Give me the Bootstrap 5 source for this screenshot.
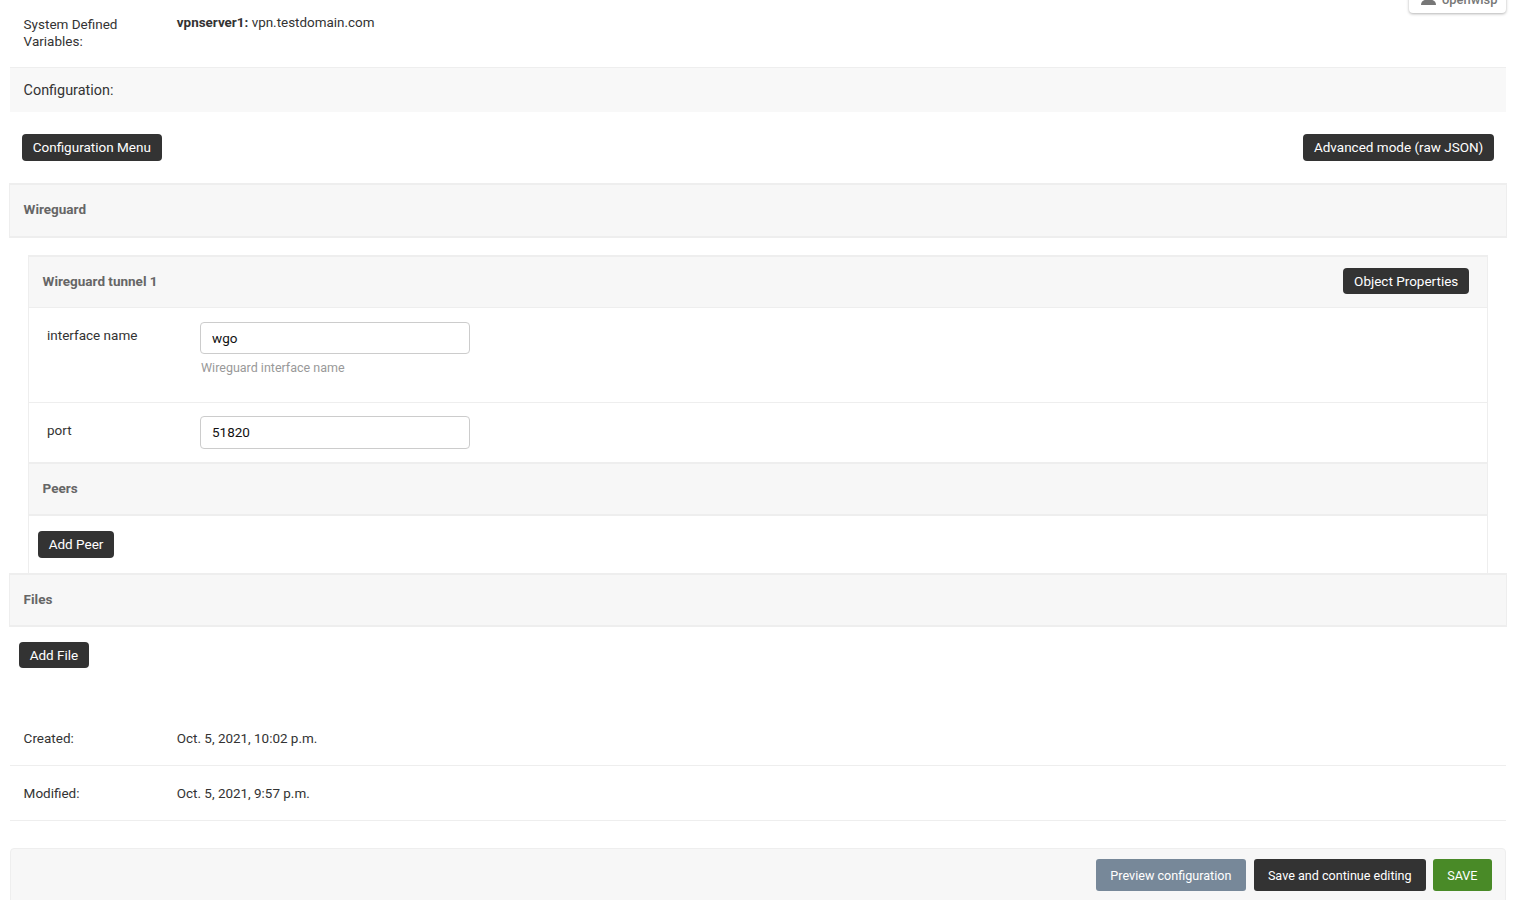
<!DOCTYPE html>
<html lang="en">
<head>
<meta charset="utf-8">
<title>Configuration</title>
<link href="https://cdn.jsdelivr.net/npm/bootstrap@5.3.0/dist/css/bootstrap.min.css" rel="stylesheet">
<style>
html,body{height:900px;overflow:hidden;}
body{font-family:Roboto,"Liberation Sans",sans-serif;font-size:13.5px;line-height:17px;color:#333;background:#fff;position:relative;}
.pg{padding:0 13px 0 10px;}
.lbl{width:166.8px;flex:none;padding-left:13.6px;}
.val,.metaval{font-size:13.44px;}
.sysrow{height:67px;padding-top:16px;}
.sysrow .val{margin-top:-2px;}
.cfgbar{height:45px;background:#f8f8f8;border-top:1px solid #eee;font-size:14.4px;padding:14px 13.6px 0;color:#333;}
.cfgtools{height:71px;padding:22px 12px 0;}
.dbtn{background:#333;color:#fff;border:0;border-radius:4px;font-size:13.5px;line-height:17px;padding:5px 10.7px;height:27px;white-space:nowrap;}
.dbtn.tall{height:26px;padding:4px 10.7px;}
.sect{margin:0 -1px;background:#f7f7f7;border:1px solid #eee;border-width:2px 1px 2px 1px;font-weight:700;color:#666;height:55px;padding:16px 13.6px 0;}
.sect.low{height:54px;}
.tunnel{margin:17px 18px 0 18px;border:1px solid #eee;border-width:2px 1px 0;}
.thead{background:#f7f7f7;height:51px;padding:0 18px 2px 13.6px;font-weight:700;color:#666;border-bottom:1px solid #eee;}
.frow{padding:14px 18px;border-bottom:1px solid #eee;display:flex;}
.frow.r1{height:95px;}
.frow.r2{height:59px;border-bottom:0;padding-top:13px;}
.frow.r2 .flbl{margin-top:6px;}
.flbl{width:153px;flex:none;margin-top:5px;}
.finp{width:270px;height:32px;border:1px solid #ccc;border-radius:4px;font-size:13.5px;color:#111;padding:0 11px;box-shadow:none;}
.frow.r2 .finp{height:33px;padding-bottom:2px;}
.fhelp{font-size:12.5px;color:#999;margin-top:5px;padding-left:1px;}
.sect.inner{margin:0;border-width:2px 0;height:54px;padding:16px 13.6px 0;}
.addrow{height:57px;padding:15px 9px 0;}
.addfile{height:84px;padding:15px 9px 0;}
.metarow{height:55px;padding-top:19px;border-bottom:1px solid #eee;}
.submitbar{margin-top:27px;height:70px;background:#f7f7f7;border:1px solid #eee;border-radius:4px;padding:10px 13px 0 0;gap:8px;}
.sbtn{height:32px;border:0;border-radius:3px;color:#fff;font-size:12.6px;line-height:17px;padding:0 14px;}
.sgrey{background:#778899;padding:0 14.5px;}
.sdark{background:#333;}
.sgreen{background:#498a27;padding:0 14.5px;margin-left:-1px;}
.userchip{position:absolute;top:-15px;right:13px;width:97px;height:28px;background:#fff;border-radius:4px;box-shadow:0 1px 3px rgba(0,0,0,.3);color:#777;padding:6px 0 0 33px;font-size:12.9px;font-weight:500;}
.userchip svg{position:absolute;left:12px;top:6px;}
</style>
</head>
<body>
<div class="userchip"><svg width="15" height="15" viewBox="0 0 16 16"><circle cx="8" cy="4" r="4" fill="#777"/><path d="M0 15c0-4 3-6 8-6s8 2 8 6z" fill="#777"/></svg>openwisp</div>
<div class="pg">
  <div class="sysrow d-flex">
    <div class="lbl">System Defined<br>Variables:</div>
    <div class="val"><strong>vpnserver1:</strong> vpn.testdomain.com</div>
  </div>
  <div class="cfgbar">Configuration:</div>
  <div class="cfgtools d-flex justify-content-between align-items-start">
    <button class="dbtn" type="button">Configuration Menu</button>
    <button class="dbtn" type="button">Advanced mode (raw JSON)</button>
  </div>
  <div class="sect">Wireguard</div>
  <div class="tunnel">
    <div class="thead d-flex justify-content-between align-items-center"><span>Wireguard tunnel 1</span><button class="dbtn tall fw-normal" type="button">Object Properties</button></div>
    <div class="frow r1">
      <label class="flbl">interface name</label>
      <div><input class="form-control finp" value="wgo"><div class="fhelp">Wireguard interface name</div></div>
    </div>
    <div class="frow r2">
      <label class="flbl">port</label>
      <div><input class="form-control finp" value="51820"></div>
    </div>
    <div class="sect inner">Peers</div>
    <div class="addrow"><button class="dbtn" type="button">Add Peer</button></div>
  </div>
  <div class="sect low">Files</div>
  <div class="addfile"><button class="dbtn tall" type="button">Add File</button></div>
  <div class="metarow d-flex"><div class="lbl">Created:</div><div class="metaval">Oct. 5, 2021, 10:02 p.m.</div></div>
  <div class="metarow d-flex"><div class="lbl">Modified:</div><div class="metaval">Oct. 5, 2021, 9:57 p.m.</div></div>
  <div class="submitbar d-flex justify-content-end align-items-start">
    <button class="sbtn sgrey" type="button">Preview configuration</button>
    <button class="sbtn sdark" type="button">Save and continue editing</button>
    <button class="sbtn sgreen" type="button">SAVE</button>
  </div>
</div>
</body>
</html>
